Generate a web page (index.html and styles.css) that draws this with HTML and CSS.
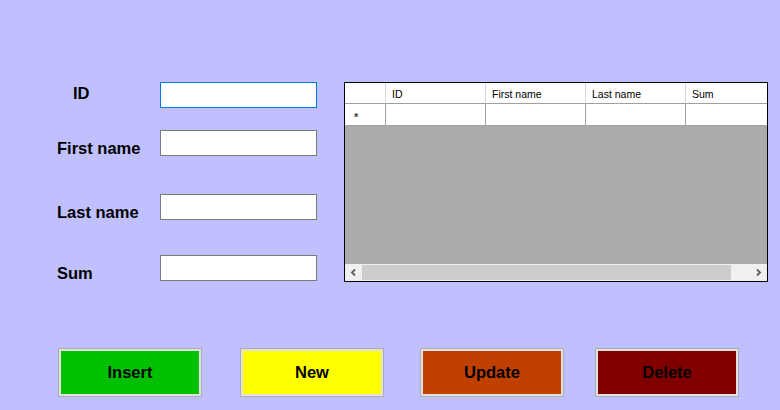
FILE: index.html
```html
<!DOCTYPE html>
<html>
<head>
<meta charset="utf-8">
<link rel="stylesheet" href="styles.css">
</head>
<body>
<div class="form">
  <div class="top">
    <div class="labels">
      <div class="label label-id">ID</div>
      <div class="label label-first">First name</div>
      <div class="label label-last">Last name</div>
      <div class="label label-sum">Sum</div>
    </div>
    <div class="inputs">
      <input class="field field-id focused" type="text">
      <input class="field field-first" type="text">
      <input class="field field-last" type="text">
      <input class="field field-sum" type="text">
    </div>
    <div class="grid">
      <div class="grid-body">
        <div class="row head">
          <div class="cell rowhead"></div>
          <div class="cell col">ID</div>
          <div class="cell col">First name</div>
          <div class="cell col">Last name</div>
          <div class="cell col last">Sum</div>
        </div>
        <div class="row data">
          <div class="cell rowhead"><span class="star">*</span></div>
          <div class="cell col"></div>
          <div class="cell col"></div>
          <div class="cell col"></div>
          <div class="cell col last"></div>
        </div>
        <div class="empty"></div>
      </div>
      <div class="hscroll">
        <div class="arrow">
          <svg width="9" height="9" viewBox="0 0 9 9"><path d="M6 1.5 L3 4.5 L6 7.5" fill="none" stroke="#606060" stroke-width="1.8"/></svg>
        </div>
        <div class="thumb"></div>
        <div class="track"></div>
        <div class="arrow">
          <svg width="9" height="9" viewBox="0 0 9 9"><path d="M3 1.5 L6 4.5 L3 7.5" fill="none" stroke="#606060" stroke-width="1.8"/></svg>
        </div>
      </div>
    </div>
  </div>
  <div class="buttons">
    <button class="btn btn-insert">Insert</button>
    <button class="btn btn-new">New</button>
    <button class="btn btn-update">Update</button>
    <button class="btn btn-delete">Delete</button>
  </div>
</div>
</body>
</html>
```
FILE: styles.css
```css
html, body {
  margin: 0;
  padding: 0;
  background: #c0c0ff;
  width: 780px;
  height: 410px;
  overflow: hidden;
}
body {
  font-family: "Liberation Sans", Arial, sans-serif;
}
.top {
  display: flex;
  padding-top: 82px;
}
.labels {
  width: 160px;
  display: flex;
  flex-direction: column;
  padding-left: 57px;
  box-sizing: border-box;
}
.label {
  font-weight: bold;
  font-size: 16.5px;
  line-height: 19px;
  color: #000;
  white-space: nowrap;
}
.label-id { margin-left: 16px; margin-top: 2px; }
.label-first { margin-top: 36px; }
.label-last { margin-top: 45px; }
.label-sum { margin-top: 42px; }
.inputs {
  width: 184px;
  display: flex;
  flex-direction: column;
}
.field {
  width: 157px;
  height: 26px;
  box-sizing: border-box;
  border: 1px solid #7a7a7a;
  background: #fff;
  margin: 0;
  padding: 0;
  outline: none;
}
.field.focused { border-color: #0078d7; }
.field-first { margin-top: 22px; }
.field-last { margin-top: 38px; }
.field-sum { margin-top: 35px; }
.grid {
  width: 424px;
  height: 200px;
  box-sizing: border-box;
  border: 1px solid #000;
  background: #ababab;
  display: flex;
  flex-direction: column;
  overflow: hidden;
}
.grid-body {
  flex: 1;
  display: flex;
  flex-direction: column;
  overflow: hidden;
}
.row {
  display: flex;
  background: #fff;
  flex: none;
}
.row.head { height: 21px; }
.row.data { height: 22px; }
.cell {
  box-sizing: border-box;
  flex: none;
  font-size: 10.5px;
  color: #000;
  padding-left: 6px;
  display: flex;
  align-items: center;
}
.rowhead { width: 41px; }
.col { width: 100px; }
.col.last { width: 100px; }
.head .cell {
  border-right: 1px solid #d7d7d7;
  border-bottom: 1px solid #a0a0a0;
  padding-top: 1px;
}
.head .rowhead { border-right: 1px solid #d7d7d7; }
.data .cell {
  border-right: 1px solid #a0a0a0;
  border-bottom: 1px solid #a0a0a0;
}
.star {
  font-size: 11px;
  font-weight: bold;
  color: #404040;
  margin-left: 3px;
  margin-top: 4px;
}
.empty { flex: 1; }
.hscroll {
  height: 17px;
  flex: none;
  background: #f0f0f0;
  display: flex;
  align-items: stretch;
}
.arrow {
  width: 17px;
  display: flex;
  align-items: center;
  justify-content: center;
  flex: none;
}
.thumb {
  width: 369px;
  background: #cdcdcd;
  margin: 1px 0;
  flex: none;
}
.track { flex: 1; }
.buttons {
  display: flex;
  padding-left: 58px;
  margin-top: 65px;
}
.btn {
  width: 144px;
  height: 49px;
  box-sizing: border-box;
  border: 1px solid #adadad;
  box-shadow: inset 0 0 0 2px #e1e1e1;
  margin: 0;
  padding: 0;
  font-family: "Liberation Sans", Arial, sans-serif;
  font-weight: bold;
  font-size: 16.5px;
  color: #000;
  flex: none;
}
.btn-insert { background: #00c000; }
.btn-new { background: #ffff00; margin-left: 38px; }
.btn-update { background: #c04000; margin-left: 36px; }
.btn-delete { background: #800000; margin-left: 31px; }
```
